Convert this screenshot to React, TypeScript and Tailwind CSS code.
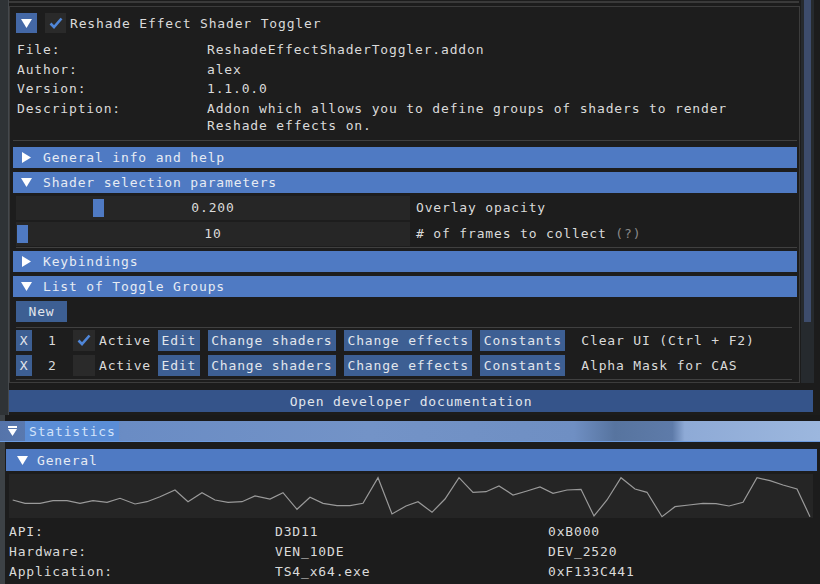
import React from "react";

const Tri = ({ down = false, className = "" }: { down?: boolean; className?: string }) => (
  <svg width="11" height="11" viewBox="0 0 11 11" className={className}>
    {down ? <polygon points="0,1 11,1 5.5,10" fill="#ffffff" /> : <polygon points="1,0 10,5.5 1,11" fill="#ffffff" />}
  </svg>
);

const Check = () => (
  <svg width="14" height="12" viewBox="0 0 14 12">
    <polyline points="1.5,6.5 5,10 12.5,1.5" fill="none" stroke="#4f86d8" strokeWidth="2.6" />
  </svg>
);

const Header = ({ title, open = false }: { title: string; open?: boolean }) => (
  <div className="h-[21px] bg-[#4f7ac3] flex items-center pl-[8px] text-[#e6ebf3]">
    <Tri down={open} />
    <span className="ml-[11px]">{title}</span>
  </div>
);

const Sep = () => <div className="h-px bg-[#404040]" />;

const Btn = ({ label, className = "" }: { label: string; className?: string }) => (
  <div className={`h-[21px] bg-[#3d5f93] flex items-center px-[3.5px] text-[#e2e6ec] ${className}`}>{label}</div>
);

const Slider = ({ value, grab, label, help }: { value: string; grab: number; label: string; help?: boolean }) => (
  <div className="flex items-center h-[24px] ml-[3px]">
    <div className="relative w-[394px] h-[24px] bg-[#262626] flex items-center justify-center">
      <div className="absolute top-[3px] w-[11px] h-[18px] bg-[#4f7ac3]" style={{ left: grab }} />
      <span>{value}</span>
    </div>
    <span className="ml-[6px]">{label}</span>
    {help && <span className="ml-[8.7px] text-[#8a8a8a]">(?)</span>}
  </div>
);

const GroupRow = ({ n, active, name }: { n: string; active: boolean; name: string }) => (
  <div className="flex items-center h-[21px] ml-[3px]">
    <Btn label="X" className="w-[16px] justify-center px-0" />
    <span className="ml-[16px] w-[9px]">{n}</span>
    <div className="ml-[16px] w-[22px] h-[21px] bg-[#2a2a2a] flex items-center justify-center">{active && <Check />}</div>
    <span className="ml-[4px]">Active</span>
    <Btn label="Edit" className="ml-[7px]" />
    <Btn label="Change shaders" className="ml-[8px]" />
    <Btn label="Change effects" className="ml-[8px]" />
    <Btn label="Constants" className="ml-[8px]" />
    <span className="ml-[16px]">{name}</span>
  </div>
);

const plot = [
  [12.7, 500], [25, 503.3], [40, 503.3], [53, 500.7], [67, 500.7], [80, 503.3], [93, 500.7], [107, 502.3],
  [120, 498.3], [135, 504], [147, 501.7], [160, 496.7], [175, 490], [188, 501.7], [202, 492.7], [215, 500],
  [228, 502.3], [242, 501.7], [255, 496], [270, 499], [283, 492.7], [297, 509.3], [310, 497.3], [323, 503.3],
  [337, 505.7], [350, 505.7], [363, 503.3], [378, 477.7], [392, 514], [406, 506], [418, 501.7], [432, 512.3],
  [445, 499], [459, 477.7], [473, 492.3], [486, 491.7], [499, 486], [513, 495], [527, 491], [540, 487],
  [553, 493.3], [567, 490], [581, 489.3], [594, 516], [607, 500], [621, 477.7], [635, 489], [647, 492.3],
  [662, 516.7], [675, 506.7], [689, 505], [703, 503.3], [716, 503.7], [729, 506], [743, 502.3], [757, 477.7],
  [770, 480.7], [783, 485], [797, 489], [810, 516.7],
];

const info: [string, string][] = [
  ["File:", "ReshadeEffectShaderToggler.addon"],
  ["Author:", "alex"],
  ["Version:", "1.1.0.0"],
];

const stats: [string, string, string][] = [
  ["API:", "D3D11", "0xB000"],
  ["Hardware:", "VEN_10DE", "DEV_2520"],
  ["Application:", "TS4_x64.exe", "0xF133C441"],
];

export default function App() {
  return (
    <div className="w-[820px] h-[584px] overflow-hidden bg-[#1c1c1c] text-[#dadada] font-['DejaVu_Sans_Mono',monospace] text-[13px] tracking-[0.84px] leading-none">
      {/* addon window */}
      <div className="flex h-[415px]">
        <div className="w-[9px] bg-[#2f3336] border-r border-[#45494d]" />
        <div className="flex-1 flex flex-col">
          <div className="flex h-[383px]">
            <div className="w-[791px] flex flex-col">
              <div className="h-[2px] mt-px bg-[#3a3a3a] mr-[1px]" />
              <div className="flex-1 mt-[3px] border border-[#3c3c3c] bg-[#1d1d1d] pl-[3px] pr-[2px] pt-[6px] flex flex-col">
                <div className="flex items-center h-[20px] ml-[3px]">
                  <div className="w-[21px] h-[20px] bg-[#4468a6] flex items-center justify-center">
                    <Tri down />
                  </div>
                  <div className="ml-[8px] w-[21px] h-[20px] bg-[#2a2a2a] flex items-center justify-center">
                    <Check />
                  </div>
                  <span className="ml-[4px]">Reshade Effect Shader Toggler</span>
                </div>
                <div className="mt-[7px] ml-[4px]">
                  {info.map(([k, v]) => (
                    <div key={k} className="flex h-[19.6px] leading-[19.6px]">
                      <span className="w-[190px]">{k}</span>
                      <span>{v}</span>
                    </div>
                  ))}
                  <div className="flex mt-[1.5px] leading-[17px]">
                    <span className="w-[190px]">Description:</span>
                    <span className="w-[560px]">
                      Addon which allows you to define groups of shaders to render Reshade effects on.
                    </span>
                  </div>
                </div>
                <div className="mt-[5.5px]"><Sep /></div>
                <div className="mt-[6px]"><Header title="General info and help" /></div>
                <div className="mt-[4px]"><Header title="Shader selection parameters" open /></div>
                <div className="mt-[3px]"><Slider value="0.200" grab={77} label="Overlay opacity" /></div>
                <div className="mt-[2px]"><Slider value="10" grab={1} label="# of frames to collect" help /></div>
                <div className="mt-[1px] ml-[3px]"><Sep /></div>
                <div className="mt-[3px]"><Header title="Keybindings" /></div>
                <div className="mt-[4px]"><Header title="List of Toggle Groups" open /></div>
                <div className="mt-[4px] ml-[3px]"><Btn label="New" className="w-[51px] justify-center" /></div>
                <div className="mt-[5px] ml-[3px] mr-[5px]"><Sep /></div>
                <div className="mt-[2px]"><GroupRow n="1" active name="Clear UI (Ctrl + F2)" /></div>
                <div className="mt-[4px]"><GroupRow n="2" active={false} name="Alpha Mask for CAS" /></div>
                <div className="mt-[3px] ml-[3px] mr-[5px]"><Sep /></div>
              </div>
            </div>
            <div className="w-[13px] ml-[1px] flex flex-col bg-[#262a2e]">
              <div className="h-[322px] mx-[3px] bg-[#3d4c6c]" />
            </div>
          </div>
          <div className="mt-[7px] mr-[7px] h-[22px] bg-[#35548a] flex items-center justify-center text-[#e2e6ec]">
            Open developer documentation
          </div>
        </div>
      </div>

      {/* statistics window */}
      <div className="flex h-[169px]">
        <div className="w-[5px] bg-[#3d4246]" />
        <div className="flex-1 flex flex-col">
          <div className="h-[6px] bg-[#1a1a1a]" />
          <div className="h-[21px] -ml-[5px] flex items-stretch border-b border-[#6c9be0] bg-[linear-gradient(90deg,#5574aa_0%,#6a8cc4_15%,#7393c7_45%,#6f8fc3_70%,#57749f_75%,#5e7ba9_82%,#8eaad6_83.5%,#9cb7de_100%)]">
            <div className="w-[25px] flex flex-col items-center justify-center">
              <div className="w-[9px] h-[2px] bg-white mb-[1px]" />
              <svg width="9" height="7" viewBox="0 0 9 7"><polygon points="0,0 9,0 4.5,7" fill="#ffffff" /></svg>
            </div>
            <div className="w-[94px] bg-[#5a8dd6] flex items-center pl-[4px] text-[#d2e3fa]">Statistics</div>
          </div>
          <div className="h-[7px]" />
          <div className="h-[22px] mr-[3px] ml-[1px] bg-[#4f7ac3] flex items-center pl-[11px] text-[#e6ebf3]">
            <Tri down />
            <span className="ml-[9px]">General</span>
          </div>
          <div className="mt-[3px] ml-[4px] mr-[7px] h-[44px] bg-[#252525]">
            <svg width="804" height="44" viewBox="9 474 804 44">
              <polyline points={plot.map((p) => p.join(",")).join(" ")} fill="none" stroke="#9a9a9a" strokeWidth="1.2" />
            </svg>
          </div>
          <div className="mt-[4px] ml-[4px]">
            {stats.map(([a, b, c]) => (
              <div key={a} className="flex h-[20px] leading-[20px]">
                <span className="w-[266px]">{a}</span>
                <span className="w-[273px]">{b}</span>
                <span>{c}</span>
              </div>
            ))}
          </div>
        </div>
      </div>
    </div>
  );
}
